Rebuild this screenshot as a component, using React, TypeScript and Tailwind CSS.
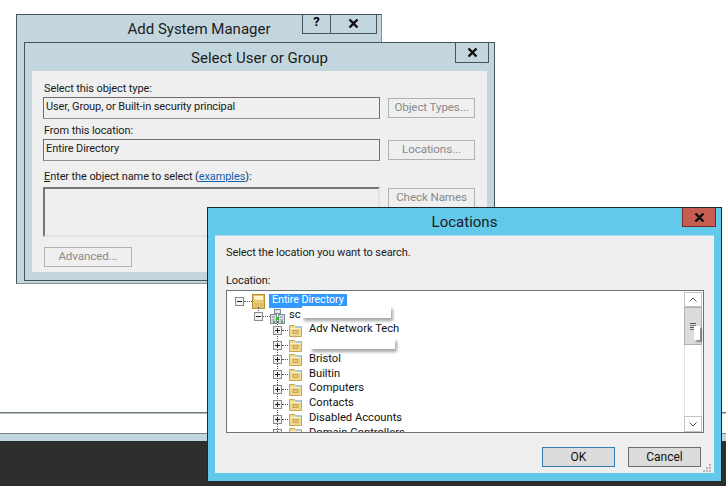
const font = 'font-["Roboto","Noto_Sans",sans-serif]';

function DlgButton({ label, className = '' }: { label: string; className?: string }) {
  return (
    <div className={`flex items-center justify-center border border-[#adb2b5] pb-[1px] text-[11.6px] text-[#8a8a8a] ${className}`}>
      {label}
    </div>
  );
}

function Field({ text }: { text: string }) {
  return (
    <div className="flex h-[22px] w-[337px] items-center border border-[#6d6d6d] border-b-[#8f8f8f] bg-[#efefef] pb-[3px] pl-[2px] text-[11px] leading-none tracking-[-0.1px] text-[#1a1a1a]">
      {text}
    </div>
  );
}

function CloseGlyph() {
  return (
    <svg width="11" height="9" viewBox="0 0 11 9" className="shrink-0">
      <path d="M1.5 0.5L9.5 8.5M9.5 0.5L1.5 8.5" stroke="#111" strokeWidth="2.4" fill="none" />
    </svg>
  );
}

function FolderIcon() {
  return (
    <svg width="15" height="13" viewBox="0 0 15 13" className="shrink-0">
      <path d="M1.5 1.5h5l1 1h6v10h-12z" fill="#f1d88f" stroke="#c7a558" />
      <path d="M2 4.5h11" stroke="#fbf0c6" />
      <rect x="8" y="2" width="5" height="2" fill="#a8c9d6" />
      <rect x="5" y="6.5" width="5" height="3" fill="#e9c76c" stroke="#a98a3c" strokeWidth="0.6" />
    </svg>
  );
}

function DirectoryIcon() {
  return (
    <svg width="13" height="15" viewBox="0 0 13 15" className="shrink-0">
      <rect x="0.5" y="0.5" width="12" height="14" fill="#e2bf62" stroke="#b8923a" />
      <rect x="2" y="2" width="9" height="4" fill="#fff4c8" />
      <path d="M2 8h9" stroke="#f5dd96" />
    </svg>
  );
}

function DomainIcon() {
  return (
    <svg width="15" height="15" viewBox="0 0 15 15" className="shrink-0">
      <rect x="4.5" y="0.5" width="6" height="4" fill="#dfe5e8" stroke="#7f8c92" />
      <rect x="0.5" y="5.5" width="6" height="9" fill="#d5dde1" stroke="#7f8c92" />
      <rect x="8.5" y="5.5" width="6" height="9" fill="#d5dde1" stroke="#7f8c92" />
      <path d="M2 8h3M2 11h3M10 8h3M10 11h3" stroke="#8a979c" />
      <rect x="6" y="8" width="3" height="3" fill="#3fb53f" />
      <rect x="3" y="12" width="2" height="2" fill="#3fb53f" />
      <rect x="11" y="12" width="2" height="2" fill="#3fb53f" />
    </svg>
  );
}

function GripIcon() {
  return (
    <svg width="9" height="8" viewBox="0 0 9 8">
      <path d="M7 0h2v2H7zM4 3h2v2H4zM7 3h2v2H7zM1 6h2v2H1zM4 6h2v2H4zM7 6h2v2H7z" fill="#b5b5b5" />
    </svg>
  );
}

function Toggle({ open }: { open?: boolean }) {
  return (
    <svg width="9" height="9" viewBox="0 0 9 9" className="relative z-10 shrink-0">
      <rect x="0.5" y="0.5" width="8" height="8" fill="#f2f2f2" stroke="#8b8b8b" />
      <path d={open ? 'M2 4.5h5' : 'M2 4.5h5M4.5 2v5'} stroke="#222" />
    </svg>
  );
}

function Dots({ className = 'w-[6px]' }: { className?: string }) {
  return <div className={`shrink-0 border-t border-dotted border-[#555] ${className}`} />;
}

function FolderRow({ name }: { name: string }) {
  return (
    <div className="flex h-[14.8px] items-center pl-[46px]">
      <Toggle />
      <Dots />
      <FolderIcon />
      <span className="ml-[6px] whitespace-nowrap pb-[3px] text-[11.2px] leading-none text-[#111]">{name}</span>
    </div>
  );
}

export default function App() {
  return (
    <div className={`relative h-[486px] w-[726px] overflow-hidden bg-white ${font}`}>
      {/* desktop behind the dialogs */}
      <div className="h-[412px]" />
      <div className="h-[2px] border-b border-[#b4bcc0] bg-[#6f7a80]" />
      <div className="h-[19px]" />
      <div className="h-[1px] bg-[#7b8386]" />
      <div className="h-[7px] bg-[#c3d6dd]" />
      <div className="h-[45px] bg-[#2e2e2e]" />

      {/* Add System Manager */}
      <div className="absolute left-[16px] top-[14px] h-[270px] w-[366px] border border-[#46555b] border-b-[#7f9097] border-r-[#7f9097] bg-[#c3d6dd]">
        <div className="pt-[4px] text-center text-[15px] leading-[20px] text-[#1c1c1c]">Add System Manager</div>
        <div className="absolute left-[285px] top-0 flex h-[19px] w-[75px] border border-t-0 border-[#46555b] text-[13px] font-bold leading-[14px]">
          <div className="flex w-[28px] justify-center border-r border-[#46555b]">?</div>
          <div className="flex flex-1 items-center justify-center pb-[2px]">
            <CloseGlyph />
          </div>
        </div>
      </div>

      {/* Select User or Group */}
      <div className="absolute left-[24px] top-[42px] flex h-[239px] w-[471px] flex-col border border-[#46555b] bg-[#c3d6dd] px-[7px] pb-[8px]">
        <div className="relative h-[28px] shrink-0 pt-[5px] text-center text-[15px] leading-[20px] text-[#1c1c1c]">
          Select User or Group
          <div className="absolute right-[-2px] top-0 flex h-[20px] w-[34px] items-center justify-center border border-t-0 border-[#46555b]">
            <CloseGlyph />
          </div>
        </div>
        <div className="flex-1 bg-[#efefef] pl-[11px] pr-[12px] pt-[10px] text-[11px] tracking-[-0.1px] text-[#1a1a1a]">
          <div className="flex h-[15px] items-center pl-[1px] leading-none">Select this object type:</div>
          <div className="mt-[1px] flex gap-[8px]">
            <Field text="User, Group, or Built-in security principal" />
            <DlgButton label="Object Types..." className="mt-[1px] h-[20px] w-[87px]" />
          </div>
          <div className="mt-[4px] flex h-[15px] items-center pl-[1px] leading-none">From this location:</div>
          <div className="mt-[1px] flex gap-[8px]">
            <Field text="Entire Directory" />
            <DlgButton label="Locations..." className="mt-[1px] h-[20px] w-[87px]" />
          </div>
          <div className="mt-[8px] flex h-[15px] items-center pl-[1px] leading-none">
            <span className="underline">E</span>nter the object name to select (<span className="text-[#0f5fb0] underline">examples</span>):
          </div>
          <div className="mt-[3px] flex gap-[8px]">
            <div className="h-[50px] w-[337px] border-2 border-b-[#e2e2e2] border-r-[#e2e2e2] border-l-[#767676] border-t-[#767676]" />
            <DlgButton label="Check Names" className="mt-[1px] h-[20px] w-[87px]" />
          </div>
          <DlgButton label="Advanced..." className="ml-[1px] mt-[10px] h-[20px] w-[88px]" />
        </div>
      </div>

      {/* Locations */}
      <div className="absolute left-[207px] top-[207px] flex h-[275px] w-[515px] flex-col border border-[#1b2a30] bg-[#63c9ea] px-[7px] pb-[8px]">
        <div className="relative h-[27px] shrink-0 pt-[4px] text-center text-[15px] leading-[20px] text-[#1c1c1c]">
          Locations
          <div className="absolute right-[-2px] top-0 flex h-[19px] w-[34px] items-center justify-center border border-t-0 border-[#7a2a24] bg-[#c75d52]">
            <CloseGlyph />
          </div>
        </div>
        <div className="relative flex flex-1 flex-col border-t border-[#a9dbeb] bg-[#efefef] px-[11px] text-[11px] tracking-[-0.1px] text-[#1a1a1a]">
          <div className="mt-[9px] flex h-[15px] items-center leading-none">Select the location you want to search.</div>
          <div className="mt-[13px] flex h-[15px] items-center leading-none">Location:</div>
          <div className="relative mt-[2px] h-[143px] w-[478px] overflow-hidden border border-[#6a737a] bg-white tracking-normal">
            {/* tree guide lines */}
            <div className="absolute left-[31px] top-[16px] h-[6px] border-l border-dotted border-[#555]" />
            <div className="absolute left-[50px] top-[30px] h-[116px] border-l border-dotted border-[#555]" />

            <div className="flex h-[18px] items-center pl-[8px] pt-[2px]">
              <Toggle open />
              <Dots className="w-[8px]" />
              <DirectoryIcon />
              <span className="ml-[4px] flex h-[14px] items-center bg-[#3399ff] px-[3px] pb-[2px] text-[10.8px] leading-none tracking-[-0.1px] text-white">Entire Directory</span>
            </div>
            <div className="flex h-[14px] items-center pl-[27px]">
              <Toggle open />
              <Dots className="w-[7px]" />
              <DomainIcon />
              <span className="ml-[4px] pb-[3px] text-[11.2px] leading-none text-[#111]">sc</span>
            </div>
            <FolderRow name="Adv Network Tech" />
            <FolderRow name="" />
            <FolderRow name="Bristol" />
            <FolderRow name="Builtin" />
            <FolderRow name="Computers" />
            <FolderRow name="Contacts" />
            <FolderRow name="Disabled Accounts" />
            <FolderRow name="Domain Controllers" />

            {/* white redaction patches */}
            <div className="absolute left-[75px] top-[15px] h-[12px] w-[89px] bg-white shadow-[2px_3px_3px_rgba(0,0,0,0.35)]" />
            <div className="absolute left-[83px] top-[47px] h-[11px] w-[85px] bg-white shadow-[2px_3px_3px_rgba(0,0,0,0.35)]" />

            {/* scrollbar */}
            <div className="absolute right-[1px] top-[1px] flex h-[140px] w-[18px] flex-col">
              <div className="flex h-[15px] items-center justify-center border border-[#c4c4c4] bg-white">
                <svg width="8" height="5" viewBox="0 0 8 5"><path d="M0.5 4.5L4 1l3.5 3.5" fill="none" stroke="#555" /></svg>
              </div>
              <div className="relative flex h-[38px] flex-col items-center justify-center gap-[1px] border border-[#b0b0b0] bg-[#dcdcdc]">
                <div className="h-[1px] w-[6px] bg-[#555]" />
                <div className="h-[1px] w-[6px] bg-[#777]" />
                <div className="h-[1px] w-[6px] bg-[#555]" />
                <div className="h-[1px] w-[6px] bg-[#777]" />
                <div className="absolute left-[9px] top-[18px] h-[14px] w-[6px] bg-white shadow-[2px_2px_2px_rgba(0,0,0,0.4)]" />
              </div>
              <div className="flex-1 border-x border-[#e2e2e2] bg-white" />
              <div className="flex h-[16px] items-center justify-center border border-[#c4c4c4] bg-white">
                <svg width="8" height="5" viewBox="0 0 8 5"><path d="M0.5 0.5L4 4l3.5-3.5" fill="none" stroke="#555" /></svg>
              </div>
            </div>
          </div>
          <div className="mt-[14px] flex justify-end gap-[13px] pr-[2px] tracking-normal">
            <div className="flex h-[20px] w-[73px] items-center justify-center border border-[#2f7fb5] bg-[#dcdcdc] pb-[1px] text-[12px] text-[#111]">OK</div>
            <div className="flex h-[20px] w-[73px] items-center justify-center border border-[#6d6d6d] bg-[#dcdcdc] pb-[1px] text-[12px] text-[#111]">Cancel</div>
          </div>
          <div className="absolute bottom-[1px] right-[3px] leading-none">
            <GripIcon />
          </div>
        </div>
      </div>
    </div>
  );
}
